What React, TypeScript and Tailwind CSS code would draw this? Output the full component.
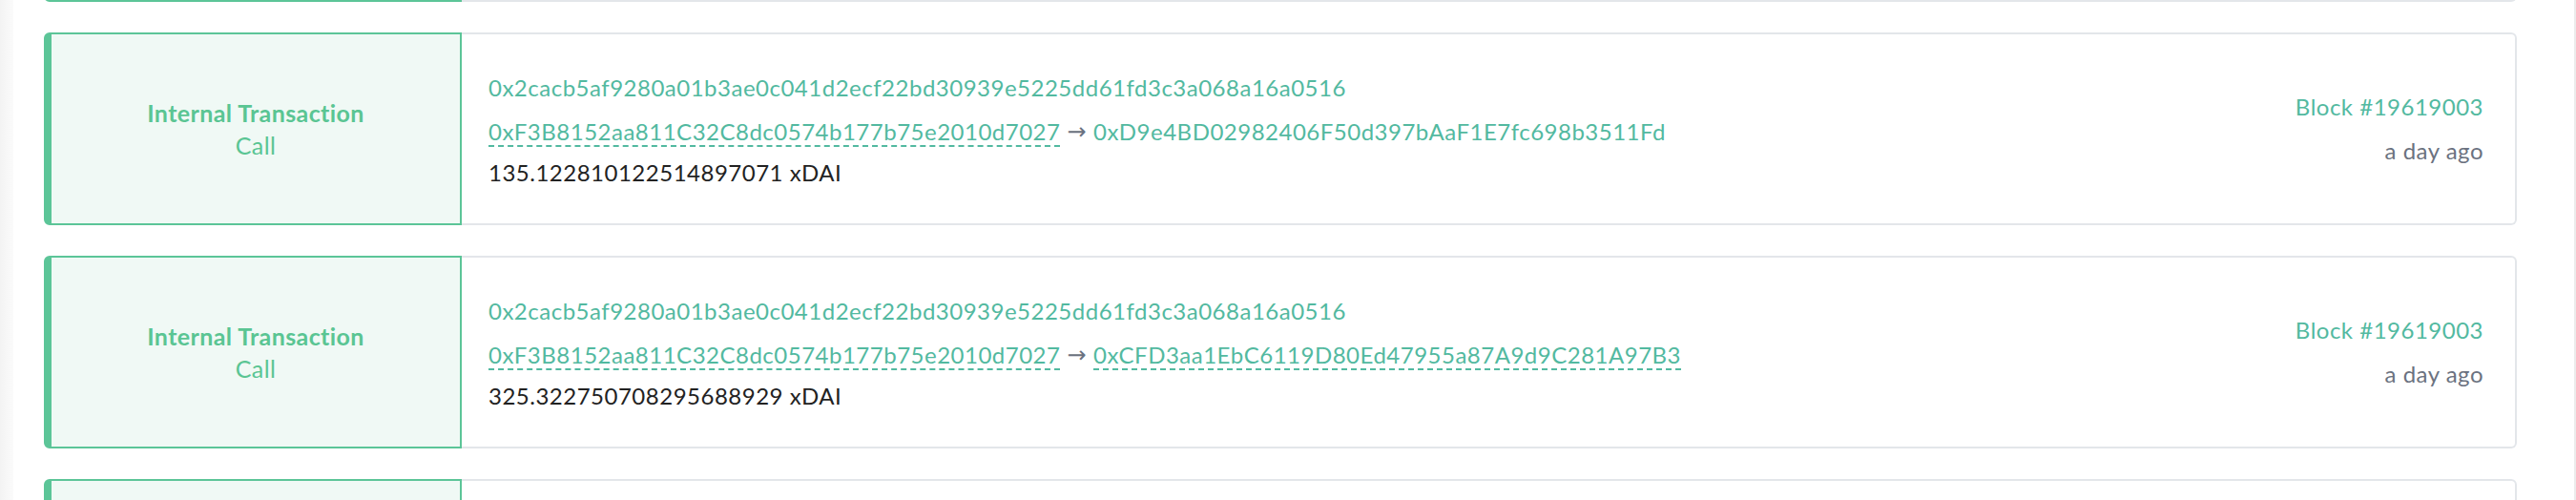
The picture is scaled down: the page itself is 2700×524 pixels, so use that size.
import React from 'react';

type Tx = {
  hash: string;
  from: string;
  to: string;
  toLinked: boolean;
  amount: string;
  block: string;
  age: string;
};

const txs: Tx[] = [
  {
    hash: '0x2cacb5af9280a01b3ae0c041d2ecf22bd30939e5225dd61fd3c3a068a16a0516',
    from: '0xF3B8152aa811C32C8dc0574b177b75e2010d7027',
    to: '0xD9e4BD02982406F50d397bAaF1E7fc698b3511Fd',
    toLinked: false,
    amount: '135.122810122514897071 xDAI',
    block: '19619003',
    age: 'a day ago',
  },
  {
    hash: '0x2cacb5af9280a01b3ae0c041d2ecf22bd30939e5225dd61fd3c3a068a16a0516',
    from: '0xF3B8152aa811C32C8dc0574b177b75e2010d7027',
    to: '0xCFD3aa1EbC6119D80Ed47955a87A9d9C281A97B3',
    toLinked: true,
    amount: '325.322750708295688929 xDAI',
    block: '19619003',
    age: 'a day ago',
  },
];

function Addr({ value, linked }: { value: string; linked: boolean }) {
  return (
    <span
      className={
        linked
          ? 'text-[#52b9a0] underline decoration-dashed decoration-[#52b9a0] decoration-2 underline-offset-[5px]'
          : 'text-[#52b9a0]'
      }
    >
      {value}
    </span>
  );
}

function TxCard({ tx, className = '' }: { tx?: Tx; className?: string }) {
  return (
    <div className={'flex h-[202px] shrink-0 ' + className}>
      {/* Type panel */}
      <div className="w-[438px] shrink-0 flex flex-col items-center justify-center bg-[#f0f9f5] border-2 border-l-[8px] border-[#5cc598] rounded-l-[6px]">
        {tx && (
          <>
            <div className="text-[25px] leading-[34px] font-bold tracking-[0.4px] text-[#5ac593]">Internal Transaction</div>
            <div className="text-[25px] leading-[34px] tracking-[0.4px] text-[#5ac593]">Call</div>
          </>
        )}
      </div>

      {/* Details */}
      <div className="flex-1 flex items-center justify-between border-2 border-l-0 border-[#e3e6ea] rounded-r-[6px] bg-white pl-[28px] pr-[33px]">
        {tx && (
          <>
            <div className="flex flex-col text-[24px] tracking-[0.5px]">
              <div className="leading-[46px] text-[#52b9a0]">{tx.hash}</div>
              <div className="leading-[46px] flex items-center">
                <Addr value={tx.from} linked />
                <span className="mx-[7px] text-[#6b7280] text-[24px] leading-none" style={{ fontFamily: '"DejaVu Sans", sans-serif' }}>
                  →
                </span>
                <Addr value={tx.to} linked={tx.toLinked} />
              </div>
              <div className="leading-[40px] text-[#222222]">{tx.amount}</div>
            </div>
            <div className="flex flex-col items-end text-[24px] tracking-[0.5px]">
              <div className="leading-[46px] text-[#52b9a0]">Block #{tx.block}</div>
              <div className="leading-[46px] text-[#6b7280]">{tx.age}</div>
            </div>
          </>
        )}
      </div>
    </div>
  );
}

export default function App() {
  return (
    <div
      className="w-[2700px] h-[524px] overflow-hidden flex bg-white"
      style={{ fontFamily: 'Lato, "Open Sans", sans-serif' }}
    >
      <div className="w-[14px] shrink-0 bg-gradient-to-r from-[#f3f3f3] to-[#fbfbfb]" />
      <div className="flex-1 flex flex-col gap-[32px] pl-[32px] pr-[60px]">
        <TxCard className="-mt-[200px]" />
        {txs.map((tx, i) => (
          <TxCard key={i} tx={tx} />
        ))}
        <TxCard />
      </div>
      <div className="w-[2px] shrink-0 bg-[#ececec]" />
    </div>
  );
}
